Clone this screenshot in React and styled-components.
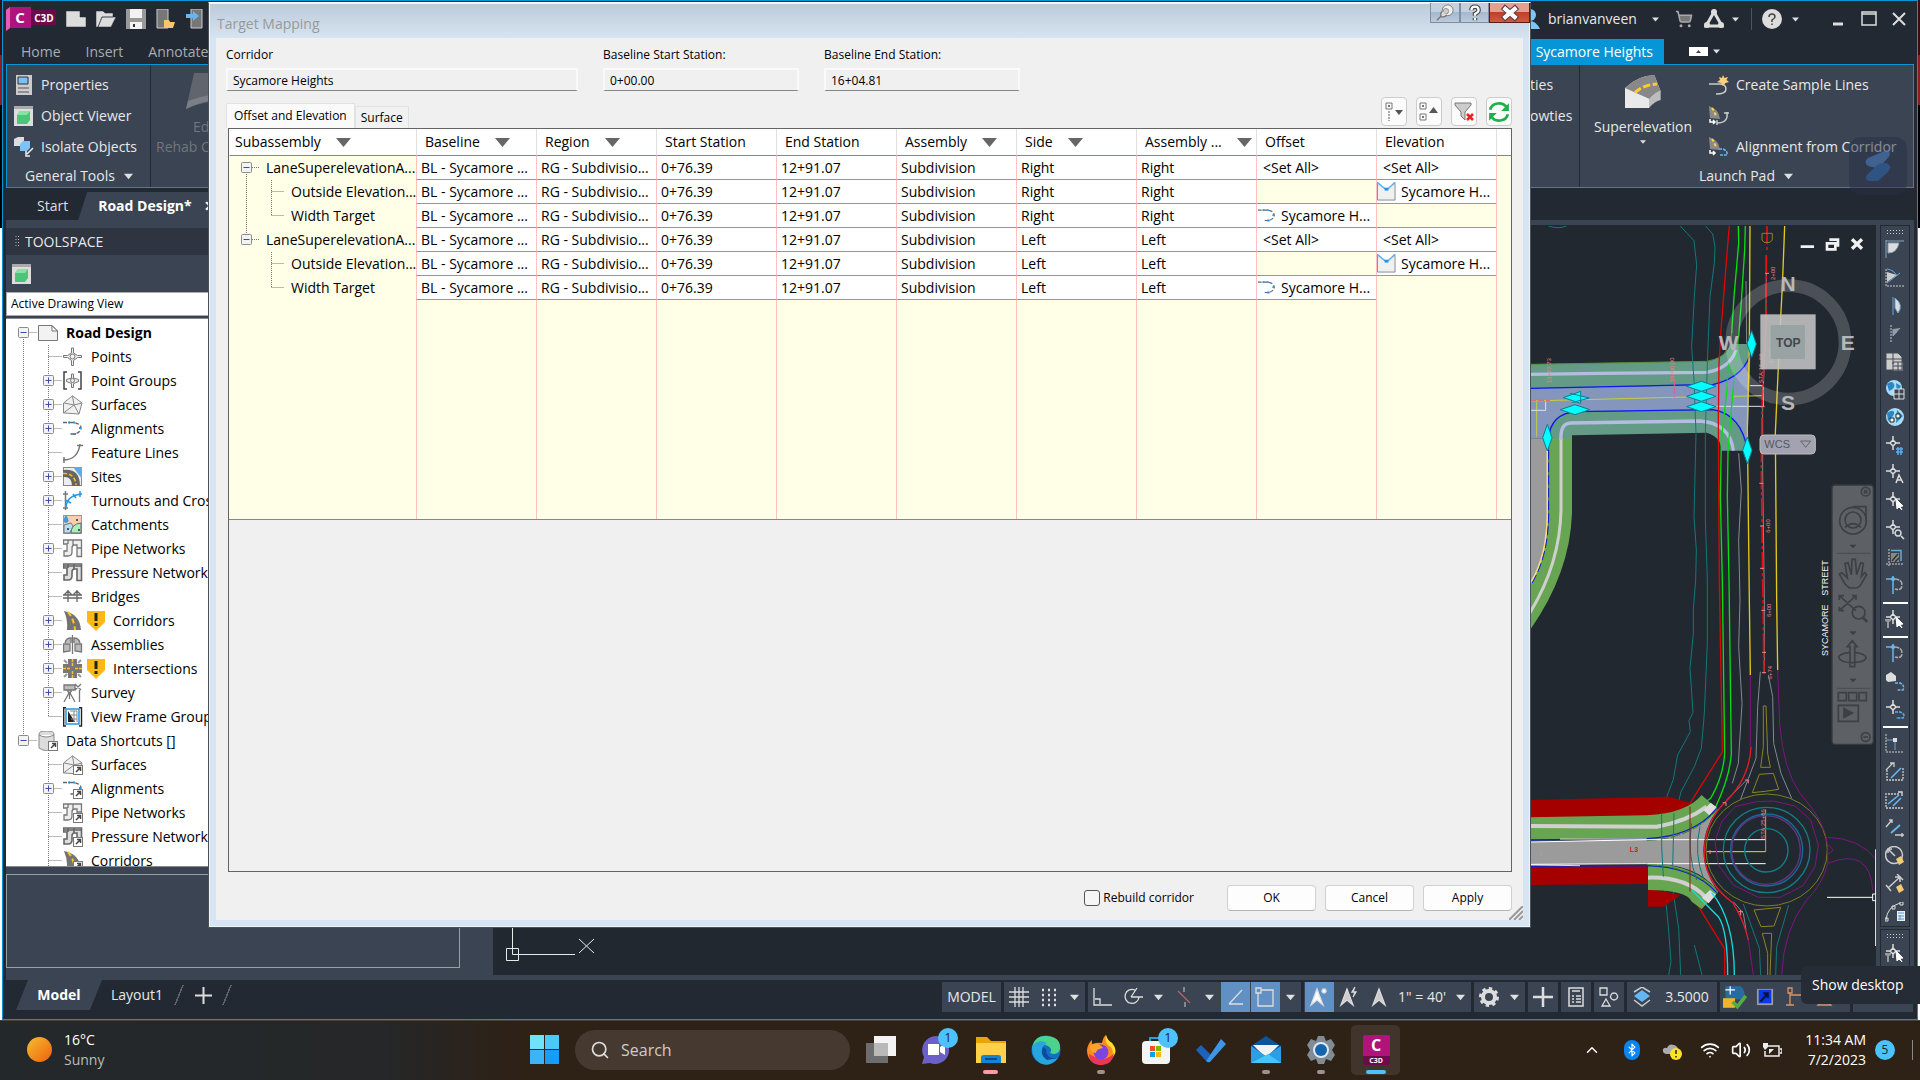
import React from "react";
import styled, { createGlobalStyle } from "styled-components";
import { ShoppingCart, Wifi, Volume2, Bluetooth, ChevronUp, Search } from "lucide-react";

const columns = [
  { title: "Baseline", filter: true },
  { title: "Region", filter: true },
  { title: "Start Station" },
  { title: "End Station" },
  { title: "Assembly", filter: true },
  { title: "Side", filter: true },
  { title: "Assembly ...", filter: true },
  { title: "Offset" },
  { title: "Elevation" },
];

const targets = [
  { name: "LaneSuperelevationA...", side: "Right", kind: "group" },
  { name: "Outside Elevation...", side: "Right", kind: "elevation" },
  { name: "Width Target", side: "Right", kind: "width" },
  { name: "LaneSuperelevationA...", side: "Left", kind: "group" },
  { name: "Outside Elevation...", side: "Left", kind: "elevation" },
  { name: "Width Target", side: "Left", kind: "width" },
];

const tree = [
  { label: "Road Design", icon: "drawing", root: true, box: "minus" },
  { label: "Points", icon: "point" },
  { label: "Point Groups", icon: "pointGroup", box: "plus" },
  { label: "Surfaces", icon: "surface", box: "plus" },
  { label: "Alignments", icon: "alignment", box: "plus" },
  { label: "Feature Lines", icon: "feature" },
  { label: "Sites", icon: "site", box: "plus" },
  { label: "Turnouts and Crossings", icon: "turnout", box: "plus" },
  { label: "Catchments", icon: "catchment" },
  { label: "Pipe Networks", icon: "pipe", box: "plus" },
  { label: "Pressure Networks", icon: "pressure" },
  { label: "Bridges", icon: "bridge" },
  { label: "Corridors", icon: "corridor", box: "plus", warn: true },
  { label: "Assemblies", icon: "assembly", box: "plus" },
  { label: "Intersections", icon: "intersection", box: "plus", warn: true },
  { label: "Survey", icon: "survey", box: "plus" },
  { label: "View Frame Groups", icon: "viewFrame", last: true },
  { label: "Data Shortcuts []", icon: "database", root: true, box: "minus", end: true, link: true },
  { label: "Surfaces", icon: "surface", link: true, second: true },
  { label: "Alignments", icon: "alignment", box: "plus", link: true, second: true },
  { label: "Pipe Networks", icon: "pipe", link: true, second: true },
  { label: "Pressure Networks", icon: "pressure", link: true, second: true },
  { label: "Corridors", icon: "corridor", link: true, second: true },
];

const sideTools = [
  "arc", "wedge", "lens", "tri", "sheet", "globe", "globe2", "ptHash", "ptA", "ptCursor", "ptZoom", "hatch", "curve", "-",
  "pick", "-",
  "curve", "surfCurve", "ptCurve", "-",
  "axisA", "axisB", "axisC", "axisD", "circleTag", "measure", "calc",
];

const glyphs = {
  drawing: (
    <path d="M.5 2.500H14L19.500 8V17.500H.5Z M14 2.500V8H19.500Z" fill="#f2f2f2" stroke="#777" />
  ),
  point: (
    <g fill="#f2f2f2" stroke="#777">
      <path d="M8.500 1h2v5l4 2.500h4v2h-4l-4 3v5h-2v-5l-4-3h-4v-2h4l4-2.500Z" />
      <circle cx="9.500" cy="9.500" r="2.500" />
    </g>
  ),
  pointGroup: (
    <g fill="#eee" stroke="#777">
      <path d="M4 1H1V18H4M15 1H18V18H15" fill="none" stroke="#444" strokeWidth="1.500" />
      <path d="M8.500 3h2v4l5 1.500v2l-5 2v4h-2v-4l-5-2v-2l5-1.500Z" />
      <circle cx="9.500" cy="9.500" r="2" />
    </g>
  ),
  surface: (
    <path d="M.5 18V8L9.500 .8L19 8L16 19ZM9.500 1L11 10L.5 18M11 10L19 8M11 10L16 19M1 8L11 10" fill="#f0f0f0" stroke="#888" />
  ),
  alignment: (
    <g fill="none" strokeWidth="1.300">
      <path d="M0 3.500H11Q18 5 18 9T12 15H7" stroke="#666" strokeDasharray="4 2" />
      <path d="M5 3.500h2M10 3.500h2M17 8v2M10 15h3" stroke="#2196e8" strokeWidth="2" />
    </g>
  ),
  feature: (
    <path d="M0 17Q15 17 17 1M1 14v6M14 2.500h6" fill="none" stroke="#777" strokeWidth="1.500" />
  ),
  site: (
    <g>
      <rect x=".5" y=".5" width="18" height="18" fill="#eee" stroke="#888" />
      <path d="M10 0H19V12Z" fill="#62a9e5" />
      <path d="M0 3Q17 1 17 19H9Q9 9 0 10Z" fill="#666" />
      <path d="M0 6.500Q12 6 13 18" fill="none" stroke="#fcbf21" strokeWidth="1.500" strokeDasharray="4 2" />
    </g>
  ),
  turnout: (
    <g fill="none" strokeWidth="1.500">
      <path d="M2.500 0V19M0 3h5M0 17h5" stroke="#777" />
      <path d="M3 16Q4 4 19 3M17 0v6M10 3l3 4M2 9l6 3" stroke="#2196e8" />
    </g>
  ),
  catchment: (
    <g>
      <rect x=".5" y=".5" width="18" height="18" fill="#f7cdb0" stroke="#999" />
      <path d="M8 18Q8 9 18 8V18Z" fill="#a9efb8" stroke="#666" />
      <path d="M1 10L8 8L10 11L7 18H1Z" fill="#b7dcf5" stroke="#777" />
      <path d="M3 0Q8 7 3 8Q-2 7 3 0Z" fill="#3d9bdc" />
      <path d="M13 4h2v2h-2zM15 14h2v2h-2zM4 13h2v2h-2z" fill="#555" />
    </g>
  ),
  pipe: (
    <path d="M.5 1H18.500V17.500H14V6H11.500Q9 6 9 9V13Q9 17 5 17H1V12H4V5H.5ZM5 1v4M10 1v5M14 9h4" fill="#eee" stroke="#777" strokeWidth="1.300" />
  ),
  pressure: (
    <path d="M.5 1H18.500V17.500H14V6H11.500Q9 6 9 9V13Q9 17 5 17H1V12H4V5H.5ZM1 3H18M5 1v4M11 1v5" fill="#ddd" stroke="#666" strokeWidth="1.600" />
  ),
  bridge: (
    <path d="M0 8H19M0 11H19M5 3V15M14 3V15M1 8l4-4l4 4M10 8l4-4l4 4" fill="none" stroke="#666" strokeWidth="1.300" />
  ),
  corridor: (
    <g>
      <path d="M1 0Q17 3 18 19H4Q5 9 1 0Z" fill="#737373" />
      <path d="M5 1Q11 8 12 19" fill="none" stroke="#fcc227" strokeWidth="2" strokeDasharray="5 3" />
    </g>
  ),
  assembly: (
    <path d="M9.500 0V19M.5 17V9H7V16ZM12 16V9H18.500V17ZM2 8Q3 3 8 3V8M11 8V3Q16 3 17 8" fill="#bbb" stroke="#777" strokeWidth="1.300" />
  ),
  intersection: (
    <g>
      <path d="M5 0H14V5H19V14H14V19H5V14H0V5H5Z" fill="#777" />
      <path d="M9.500 0V7M9.500 12V19M0 9.500H7M12 9.500H19" stroke="#fcc227" strokeWidth="1.500" strokeDasharray="3 1" />
      <path d="M1 1l3 3M18 1l-3 3M1 18l3-3M18 18l-3-3" stroke="#999" strokeWidth="2" />
    </g>
  ),
  survey: (
    <g fill="#bbb" stroke="#777" strokeWidth="1.300">
      <path d="M1 2H12V7H1ZM4 7H9L7 10H6ZM12 1L18 7M18 1L12 7M16.500 7V19" />
      <path d="M6.500 9L1 19M6.500 9L12 19M6.500 9V16" fill="none" />
    </g>
  ),
  viewFrame: (
    <g fill="none">
      <path d="M3 .7H.7V19H3M16 .7H18.500V19H16" stroke="#222" strokeWidth="1.400" />
      <rect x="3" y="2" width="13" height="15" stroke="#2196e8" strokeWidth="1.500" />
      <path d="M5 4V15H12Z" fill="#222" />
      <path d="M7 4H14V15M11 4V15M8 8H14M8 12H14" stroke="#888" />
    </g>
  ),
  database: (
    <path d="M1 4V17Q8 22 16 17V4Q8 8 1 4Q0 0 8.500 0Q17 0 16 4" fill="#ddd" stroke="#888" />
  ),
};

const tools = {
  arc: <path d="M1 0V18M1 1H19M3 3H14Q12 13 3 13Z" fill="#ddd" stroke="#8aa6bd" />,
  wedge: (
    <g fill="none">
      <path d="M1 1V18H19" stroke="#ccc" strokeDasharray="2 1" />
      <path d="M2 4V14L12 7Z" fill="#ccc" />
      <path d="M2 1Q9 2 12 8M2 15L15 5" stroke="#6ca5d3" />
    </g>
  ),
  lens: <path d="M8 1V19M10 2Q19 9 13 17L10 12Z" fill="#ddd" stroke="#6ca5d3" />,
  tri: (
    <g>
      <path d="M6 1V18" stroke="#ccc" strokeDasharray="2 1" />
      <path d="M8 5V12L15 4M8 8L12 8" fill="#999" stroke="#8aa6bd" />
    </g>
  ),
  sheet: <path d="M1 1H13L17 5V18H1ZM1 7H17M8 1V12M8 10H18V19H8ZM13 10V19M8 14H18" fill="#ccc" stroke="#454b54" />,
  globe: (
    <g>
      <circle cx="9" cy="8" r="8" fill="#a9dcf5" />
      <path d="M2 4Q7 0 9 4T4 11ZM11 3L16 6L12 13Z" fill="#2a86c4" />
      <path d="M9 9H19V19H9ZM14 9V19M9 14H19" fill="#3b4453" stroke="#ddd" />
    </g>
  ),
  globe2: (
    <g>
      <circle cx="10" cy="9" r="9" fill="#a9dcf5" />
      <path d="M2 5Q8 1 9 4T3 13ZM12 2L18 8L11 15Z" fill="#2a86c4" />
      <path d="M5 10h4v4h-4zM11 6h4v4h-4z" fill="#fff" stroke="#222" />
    </g>
  ),
  calc: (
    <g>
      <path d="M1 18Q2 5 15 1M0 16h3v3H0zM7 4h3v3H7zM15 0h3v3h-3z" fill="none" stroke="#ddd" />
      <path d="M12 9H20V19H12Z" fill="#eee" />
      <path d="M13 11H19M13 14H19M13 17H19M15 13v5" stroke="#4b9bd8" />
    </g>
  ),
  hatch: (
    <g fill="none">
      <path d="M4 1V19M1 16H19" stroke="#ccc" strokeDasharray="2 1" />
      <path d="M6 5H14V14H6Z" fill="#888" />
      <path d="M7 13L13 6M10 14L14 10" stroke="#333" strokeWidth="1.500" />
      <path d="M6 2.500H16V13" stroke="#65a9d8" strokeWidth="1.500" />
    </g>
  ),
  curve: (
    <g fill="none" strokeWidth="1.500">
      <path d="M1 3H8M8 0V18" stroke="#65b7f3" />
      <path d="M9 3Q17 3 17 9T10 13" stroke="#aaa" strokeDasharray="5 1" />
      <circle cx="8" cy="3" r="2" fill="#65b7f3" stroke="none" />
    </g>
  ),
  surfCurve: (
    <g>
      <path d="M1 8V3L6 0L11 4V9L3 10Z" fill="#ddd" />
      <path d="M10 11H15Q20 13 18 18H12" fill="none" stroke="#74b5e5" strokeWidth="1.500" strokeDasharray="3 1" />
    </g>
  ),
  axisA: (
    <g fill="none">
      <path d="M1 0V18H19" stroke="#ccc" strokeDasharray="2 1" />
      <path d="M1 6H10V16" stroke="#65a9d8" />
      <path d="M8 4h4v4H8Z" fill="#ddd" />
    </g>
  ),
  axisB: (
    <g fill="none" strokeWidth="1.300">
      <path d="M2 8V18H18V5" stroke="#ccc" strokeDasharray="2 1" />
      <path d="M1 8L8 1M5 1h4v4" stroke="#ccc" />
      <path d="M6 16L16 6" stroke="#65b7f3" strokeWidth="1.600" />
    </g>
  ),
  axisC: (
    <g fill="none" strokeWidth="1.300">
      <path d="M1 3V18H19M3 4H14" stroke="#ccc" strokeDasharray="2 1" />
      <path d="M3 14L14 5M8 16L16 8" stroke="#65b7f3" strokeWidth="1.600" />
      <path d="M13 2h4v4" stroke="#ddd" />
    </g>
  ),
  axisD: (
    <g fill="none" strokeWidth="1.400">
      <path d="M1 9L7 2M4 2h3v3M10 17H19M17 15v4" stroke="#ccc" />
      <path d="M6 15L15 7" stroke="#65b7f3" strokeWidth="1.800" />
    </g>
  ),
};

const PointMark = ({ cursor, tail }) => (
  <g fill="none" stroke="#ddd" strokeWidth="1.500">
    <path d="M8 0V4M8 10V14M1 7H5M11 7H15M8 4L11 7L8 10L5 7Z" />
    {tail}
    {cursor && <path d="M11 7L18 14L15 14.500L17 18L14 15L12 17Z" fill="#fff" stroke="#fff" strokeWidth="1" />}
  </g>
);

tools.ptHash = <PointMark tail={<path d="M11 13H18M11 16H18M13 11V19M16 11V19" stroke="#55aef0" />} />;
tools.ptA = <PointMark tail={<path d="M11 19L14 11L18 19M12 16H17" />} />;
tools.ptCursor = <PointMark cursor />;
tools.ptZoom = <PointMark tail={<path d="M13 10A3 3 0 1 0 13.100 10M16 16L19 19" />} />;
tools.pick = <PointMark cursor tail={<path d="M0 9H6V11L4 12V18H2V12L0 11Z" fill="#999" stroke="none" />} />;
tools.ptCurve = <PointMark tail={<path d="M10 12H15Q21 14 18 18H11" stroke="#55aef0" strokeDasharray="3 1" />} />;
tools.circleTag = (
  <g fill="none" stroke="#ccc" strokeWidth="1.500">
    <circle cx="9" cy="9" r="8.500" />
    <path d="M4 4L10 10M3 7V3H7" />
    <path d="M11 13L16 10L19 16L14 19Z" fill="#f4ca76" stroke="none" />
  </g>
);
tools.measure = (
  <g fill="none" stroke="#ccc" strokeWidth="1.500">
    <path d="M3 14L15 3M1 11L6 17M12 0L18 6M10 3h5v5" />
    <path d="M11 13L16 10L19 16L14 19Z" fill="#f4ca76" stroke="none" />
  </g>
);

const Icon = ({ children, size = 20, label }) => (
  <svg width={size} height={size} viewBox="0 0 20 20" role="img" aria-label={label} style={{ flexShrink: 0 }}>
    {children}
  </svg>
);

const LinkMark = () => (
  <g>
    <rect x="10.500" y="10.500" width="9" height="9" fill="#fff" stroke="#777" />
    <path d="M13 17L17 13M14 12.500H17.500V16" stroke="#444" strokeWidth="1.500" fill="none" />
  </g>
);

const Caret = ({ w = 9, color = "#e0e0e0" }) => (
  <svg width={w} height={w} viewBox="0 0 10 10" aria-hidden="true">
    <path d="M0 2H10L5 8Z" fill={color} />
  </svg>
);

const TreeBox = ({ x, plus }) => (
  <g>
    <rect x={x - 5} y="6.500" width="10" height="10" rx="1" fill="#f3f3f3" stroke="#8b8b8b" />
    <path d={`M${x - 3} 11.500h6${plus ? `M${x} 8.500v6` : ""}`} stroke="#3350a5" strokeWidth="1" />
  </g>
);

const TreeGuide = ({ item, first }) => {
  const x = item.root ? 17.5 : 42.5;
  const w = item.root ? 32 : 57;
  return (
    <svg width={w} height="24" aria-hidden="true" style={{ flexShrink: 0 }}>
      <g stroke="#777" strokeDasharray="1 1" fill="none">
        <path d={`M${x} 11.500H${w - 1}`} />
        {!item.second && <path d={`M17.500 ${first ? 12 : 0}V${item.end ? 12 : 24}`} />}
        {!item.root && <path d={`M42.500 0V${item.last ? 12 : 24}`} />}
      </g>
      {item.box && <TreeBox x={x} plus={item.box === "plus"} />}
    </svg>
  );
};

const TargetGuide = ({ kind, index }) => (
  <svg width={kind === "group" ? 37 : 62} height="24" aria-hidden="true" style={{ flexShrink: 0 }}>
    <g stroke="#777" strokeDasharray="1 1" fill="none">
      {index < 4 && <path d={`M17.500 ${index === 0 ? 12 : 0}V${index === 3 ? 12 : 24}`} />}
      {kind === "group" && <path d="M23 11.500H30" />}
      {kind !== "group" && <path d={`M42.500 0V${kind === "width" ? 12 : 24}M42.500 11.500H55`} />}
    </g>
    {kind === "group" && <TreeBox x={17.5} />}
  </svg>
);

const Diamond = ({ x, y, tall }) => {
  const a = tall ? 14 : 44;
  const b = tall ? 40 : 15;
  return <path d={`M${x - a} ${y}L${x} ${y - b}L${x + a} ${y}L${x} ${y + b}Z`} fill="#00ffff" stroke="#087e8e" />;
};

const Station = ({ x, y, children }) => (
  <text transform={`translate(${x} ${y}) rotate(-90)`} fontSize="18" fill="#f28080" textAnchor="middle">
    {children}
  </text>
);

// three drawing units to one screen pixel
const PlanView = () => (
  <svg width="346" height="749" viewBox="90 18 1038 2247" fill="none" strokeWidth="3" fontFamily="Liberation Sans, sans-serif" role="img" aria-label="Plan view">
    <path d="M90 655H142V900Q142 1010 90 1090Z" fill="#9b9b9b" />
    <path d="M146 653H216V880Q210 1060 90 1230V1095Q140 1010 146 900Z" fill="#68a552" />
    <path d="M183 655V870Q180 1030 90 1178" stroke="#cfcfcf" strokeWidth="9" />
    <path d="M142 690V880Q142 1010 90 1092" stroke="#f6dd84" strokeWidth="5" />
    <path d="M146 690V880Q146 1010 92 1096" stroke="#0a18e8" strokeDasharray="28 10" />
    <path d="M90 505L640 495Q740 470 752 372L742 692Q720 590 640 570L230 575Q150 580 142 655H90Z" fill="#8596bd" />
    <path d="M90 433L620 424Q680 415 690 372H752Q745 470 640 495L90 505Z" fill="#639b87" />
    <path d="M90 433L620 424Q670 415 680 390" stroke="#58923b" />
    <path d="M142 655Q150 580 230 575L640 570Q730 590 742 692H664Q664 650 620 638L216 646V655Z" fill="#639b87" />
    <path d="M90 463L300 460L620 457Q690 445 708 390M183 660Q180 610 212 609L600 603Q690 610 700 692" stroke="#b4bce0" strokeWidth="10" />
    <path d="M90 505L640 493Q740 470 755 385M146 655Q152 580 230 575L640 569Q725 585 742 690" stroke="#0a18f4" strokeWidth="4" />
    <path d="M90 543L560 531M700 529L790 527M110 545V650" stroke="#c9cc42" />
    <path d="M90 541H150M523 480V532" stroke="#e06079" strokeDasharray="18 6" />
    <path d="M90 571H137V545M650 559H790M750 497H790V560" stroke="#dce2e8" />

    <g stroke="#12777c">
      <path d="M541 18L582 62L590 135L583 230L575 380L582 480L588 640L582 890L589 990L587 1080L580 1170V1240L570 1345L579 1478L567 1502L571 1535L533 1605L520 1678L491 1755L485 1880L490 1970L505 2120L513 2225L506 2265" />
      <path d="M617 18L638 42L645 80L643 130L630 230L622 430L616 640V900L622 1080V1270L613 1480L604 1585L583 1640L543 1715L530 1770L518 1940L520 2020L536 2125L542 2265" />
      <path d="M583 2175L606 2265M145 18Q175 28 200 18" />
    </g>
    <path d="M688 18L683 75L663 330L657 430L655 600L658 1080L667 1596L570 1750L571 2020L674 2187V2265" stroke="#e00505" strokeWidth="4" />
    <g stroke="#06df12" strokeWidth="4">
      <path d="M715 18L716 70L702 230L695 340M682 500L664 660L661 830L667 1080L674 1600Q670 1670 632 1735L575 1775" />
      <path d="M736 18L734 90L725 230L716 350M700 500L684 690L682 830L687 1080L694 1600Q690 1670 645 1765" />
      <path d="M695 340L680 500M716 350L700 500" strokeDasharray="30 14" opacity=".6" />
    </g>
    <g stroke="#e2ca1c" strokeWidth="4">
      <path d="M750 18L748 370L742 620L748 1140L751 1365" />
      <path d="M854 18L847 200L840 330L826 640L830 1140L833 1350" />
    </g>
    <path d="M799 105L798 290L788 560L788 750L793 1140V1360" stroke="#85898e" />
    <path d="M801 18V90M799 105L798 290L786 560L784 750L789 1140L792 1360" stroke="#eb0c14" strokeDasharray="55 8 10 8" strokeWidth="5" />
    <path d="M738 183L740 370M716 700L724 810L716 960L720 1140L716 1280L726 1450L715 1630L697 1690" stroke="#85898e" />
    <path d="M786 40H817V60L810 67H792L786 60Z" stroke="#8b851b" />
    <path d="M795 160h12M780 560h14M778 790h12M780 918h12M780 1045h12M784 1171h12M786 1297h12M786 1358h12" stroke="#e78b8b" />
    <Station x={825} y={160}>2+00</Station>
    <Station x={819} y={411}>3+00</Station>
    <Station x={807} y={665}>4+00</Station>
    <Station x={810} y={918}>6+00</Station>
    <Station x={813} y={1171}>6+00</Station>
    <Station x={816} y={1358}>6+74</Station>
    <Station x={790} y={445}>STA:15+68</Station>
    <Station x={152} y={452}>13+77.73</Station>
    <Station x={522} y={450}>10+00.00</Station>

    <g transform="translate(0 1080)">
      <path d="M90 660L505 650L570 668L560 720L90 735ZM90 855H444V912L90 915ZM444 925L542 945L490 980H444Z" fill="#a50000" />
      <path d="M90 712L440 706Q560 700 605 645L655 690Q600 770 440 778L90 782Z" fill="#68a552" />
      <path d="M444 848Q590 855 655 935L605 987L575 965Q560 930 444 930Z" fill="#68a552" />
      <path d="M90 785L440 778Q590 770 650 690Q570 810 650 930Q590 850 440 850L90 855Z" fill="#9b9b9b" />
      <path d="M90 738L470 740Q560 725 620 680M444 893Q560 890 618 953" stroke="#d0d0d0" strokeWidth="12" />
      <path d="M610 690L632 668L650 682L628 706ZM606 953L630 930L648 944L626 970Z" fill="#ddd" />
      <path d="M90 780L440 776Q580 770 650 686M90 859L440 857Q580 860 650 938" stroke="#1220c6" strokeWidth="4" />
      <path d="M180 777H440M90 855L240 857" stroke="#f2dfaa" />
      <path d="M440 782Q580 774 650 690M440 853Q580 860 650 934" stroke="#35832a" strokeDasharray="30 6" />
      <path d="M90 786L440 779H797M90 853L440 851H797" stroke="#fff" />
      <path d="M620 815H797" stroke="#e3e015" />
      <path d="M797 688V815M124 817V828M377 812V825M630 810V822" stroke="#f28080" />
      <text x="389" y="815" fontSize="22" fill="#e11" fontWeight="700">L3</text>
      <path d="M485 700V800L490 890M522 700L518 860M575 730Q560 820 590 900M600 740Q580 820 612 900" stroke="#12777c" />
      <path d="M570 680V935" stroke="#901717" />
      <ellipse cx="800" cy="810" rx="182" ry="168" stroke="#7f7d20" />
      <path d="M770 665L820 663L885 678L932 720L955 795L945 860L908 918L840 952L775 952L700 915L655 855L645 785L665 725L705 680Z" stroke="#7b1680" />
      <g stroke="#127f86" strokeWidth="4">
        <ellipse cx="800" cy="810" rx="130" ry="128" />
        <circle cx="800" cy="810" r="108" stroke="#156b9a" />
        <circle cx="798" cy="810" r="103" stroke="#633480" />
        <circle cx="799" cy="811" r="65" />
      </g>
      <path d="M781 275L773 380L768 535L722 657M805 285L818 350L821 490L843 580L875 655M740 600L680 660M700 965L730 1000L738 1050" stroke="#85898e" />
      <path d="M751 285V500M833 270L839 430Q850 570 900 640Q980 730 983 800V850Q970 910 920 960Q850 1050 845 1185M745 1080L760 1185" stroke="#7b1680" />
      <path d="M983 772Q1080 775 1128 838M983 850Q1110 800 1118 930M985 795L1000 810L985 822" stroke="#7b1680" />
      <path d="M790 378H798L803 520L811 562H782L790 500ZM778 583L820 580L836 628Q795 635 757 638ZM762 990L842 982L822 1038L783 1040ZM787 1060H815L810 1185M787 1060L803 1120V1185" stroke="#8b861f" />
      <path d="M730 972L778 1105L782 1185M866 975L830 1100L827 1185" stroke="#12777c" />
      <path d="M753 500Q748 600 670 672Q610 735 613 830Q620 910 700 970Q735 1030 745 1080" stroke="#e61a2a" strokeWidth="4" />
      <path d="M735 600h10v10M668 668h10v10M715 995h14M722 990v16" stroke="#f28080" />
      <path d="M575 930L655 1010Q683 1050 683 1185M635 938Q703 1020 703 1185" stroke="#10dde3" strokeWidth="4" />
      <Station x={796} y={732}>STA:25+86</Station>
      <path d="M981 952H1118M1118 942H1130V962H1118ZM1127 808V1098" stroke="#fff" />
    </g>

    <Diamond x={604} y={499} />
    <Diamond x={604} y={529} />
    <Diamond x={604} y={560} />
    <Diamond x={225} y={569} />
    <path d="M190 533L242 514V550ZM210 520L268 534L215 548" fill="#00ffff" stroke="#087e8e" />
    <Diamond x={755} y={372} tall />
    <Diamond x={742} y={691} tall />
    <Diamond x={142} y={653} tall />

    <circle cx="865" cy="367" r="170" stroke="#fff" strokeOpacity=".19" strokeWidth="38" />
    <rect x="781" y="283" width="166" height="165" fill="#c4c4c4" opacity=".88" />
    <rect x="812" y="315" width="103" height="102" fill="#9aa3a4" />
    <g fill="#b5b7b9" fontSize="63" fontWeight="700" textAnchor="middle">
      <text x="864" y="212">N</text>
      <text x="864" y="569">S</text>
      <text x="686" y="390">W</text>
      <text x="1043" y="390">E</text>
      <text x="865" y="380" fontSize="36" fill="#41474d">TOP</text>
    </g>
    <rect x="780" y="645" width="166" height="57" rx="12" fill="#a3a2b0" stroke="#bbb" />
    <text x="793" y="685" fontSize="33" fill="#55585f">WCS</text>
    <path d="M902 663H932L917 682Z" stroke="#666" />
    <g fontSize="27" fill="#f3f3f3">
      <text transform="translate(985 1308) rotate(-90)">SYCAMORE</text>
      <text transform="translate(985 1127) rotate(-90)">STREET</text>
    </g>

    <rect x="996" y="795" width="124" height="778" rx="9" fill="#5d6166" stroke="#34393f" strokeWidth="4" />
    <g stroke="#3c4146" strokeWidth="5">
      <circle cx="1097" cy="815" r="13" />
      <path d="M1092 810l10 10m0-10l-10 10" />
      <circle cx="1059" cy="902" r="40" />
      <circle cx="1059" cy="900" r="24" />
      <path d="M1059 860H1098V902M1035 922Q1059 900 1083 922" />
      <path d="M1050 975h18l-9 9zM1050 1235h18l-9 9zM1050 1377h18l-9 9z" fill="#3c4146" strokeWidth="2" />
      <path d="M1010 1000H1112M1010 1405H1112" strokeWidth="2" />
      <path d="M1035 1092L1018 1062L1026 1058L1042 1074L1035 1030L1044 1028L1054 1064L1056 1018L1066 1018L1070 1064L1082 1028L1090 1030L1084 1070L1094 1058L1100 1064L1080 1098L1070 1104H1048Z" />
      <path d="M1018 1127L1068 1172M1068 1127L1018 1172M1018 1140v-13h14M1056 1127h12v13M1018 1160v12h14" />
      <circle cx="1076" cy="1178" r="19" />
      <path d="M1088 1192L1102 1206" strokeWidth="8" />
      <path d="M1050 1340V1280H1042L1057 1262L1071 1280H1064V1340ZM1050 1297Q1016 1302 1016 1312Q1020 1328 1060 1328Q1098 1326 1098 1312Q1096 1302 1064 1297" />
      <path d="M1015 1418h24v24h-24zM1046 1418h24v24h-24zM1077 1418h22v24h-22zM1015 1456h60v48h-60z" />
      <path d="M1032 1466V1492L1057 1479Z" fill="#3c4146" />
      <circle cx="1097" cy="1551" r="13" />
      <path d="M1090 1551h14" />
    </g>
    <g stroke="#f1f1f1" strokeWidth="8">
      <path d="M902 80H942M981 70H1006V88H981ZM988 59H1014V80" />
      <path d="M1056 58L1086 86M1086 58L1056 86" strokeWidth="10" />
    </g>
  </svg>
);

const SuperIcon = ({ w = 36, h = 34 }) => (
  <svg width={w} height={h} viewBox="0 0 108 100" aria-hidden="true">
    <path d="M0 38Q40 0 88 0L107 48Q70 55 72 70V98H0Z" fill="#e9e9e9" />
    <path d="M0 38Q40 0 88 0L107 48Q88 50 72 70Z" fill="#888" />
    <path d="M30 52Q55 28 96 26" fill="none" stroke="#ffcf25" strokeWidth="9" strokeDasharray="22 8" />
    <path d="M72 70Q88 50 107 46V74Q88 78 72 98Z" fill="#bdbdbd" />
  </svg>
);

const taskApps = [
  { name: "Task view", icon: <g><rect x="0" y="8" width="22" height="20" fill="#6d6d6d" /><rect x="8" y="1" width="22" height="20" fill="#f3f3f3" /><rect x="8" y="8" width="14" height="13" fill="#b9b9b9" /></g> },
  { name: "Chat", badge: "1", icon: <g><path d="M15 1A14 14 0 1 1 9 28L1 29L3 22A14 14 0 0 1 15 1Z" fill="#6a60c8" /><path d="M7 9H18V20H7ZM19 12L24 9V20L19 17Z" fill="#fff" /></g> },
  { name: "File Explorer", mark: "pink", icon: <g><path d="M0 2H11L15 6H30V28H0Z" fill="#e9a600" /><path d="M0 8H30V28H0Z" fill="#ffd04a" /><path d="M5 28V22Q5 20 8 20H22Q25 20 25 22V28Z" fill="#1583d4" /><path d="M9 24H21" stroke="#0a4c87" strokeWidth="2" /></g> },
  { name: "Edge", icon: <g><circle cx="15" cy="15" r="14.500" fill="#1071c4" /><path d="M1 14Q3 0 16 1Q30 2 29 14Q27 21 19 18Q22 14 17 11Q8 7 1 14Z" fill="#4bd38c" /><path d="M1 13Q5 3 16 8Q9 12 12 19Q17 27 27 23Q19 33 9 28Q1 23 1 13Z" fill="#27a6dd" /><path d="M12 12Q8 20 16 25L27 23Q15 25 15 14Z" fill="#0b4d9c" /></g> },
  { name: "Firefox", mark: "dot", icon: <g><path d="M15 30Q1 28 1 15Q2 8 6 5V9Q12 7 16 8Q17 2 20 0Q21 5 26 8Q34 24 15 30Z" fill="#ff8a1d" /><path d="M20 0Q18 9 25 12Q29 18 24 25Q34 17 26 8Q21 5 20 0Z" fill="#ffdd35" /><path d="M3 19Q3 30 16 30Q27 29 28 18Q19 29 3 19Z" fill="#ed3554" /><circle cx="15" cy="17" r="7.500" fill="#7a45e0" /><path d="M4 10Q13 7 17 13Q10 14 10 18Q4 18 4 10Z" fill="#ffa42b" /></g> },
  { name: "Store", badge: "1", icon: <g><path d="M9 7V3H21V7" fill="none" stroke="#2b9be8" strokeWidth="2" /><rect x="1" y="6" width="28" height="23" rx="4" fill="#f4f4f4" /><path d="M9 11H14V16H9Z" fill="#f05023" /><path d="M15 11H20V16H15Z" fill="#7fba00" /><path d="M9 17H14V22H9Z" fill="#00a4ef" /><path d="M15 17H20V22H15Z" fill="#ffb900" /></g> },
  { name: "To Do", icon: <g><path d="M0 15L5 10L15 20L10 26Z" fill="#1c62b9" /><path d="M10 26L25 4L30 9L14 27Q12 28 10 26Z" fill="#3c97e8" /></g> },
  { name: "Mail", mark: "dot", icon: <g><path d="M0 11L15 1L30 11V15H0Z" fill="#0c549c" /><path d="M2 10H28L15 23Z" fill="#f2f2f2" /><path d="M0 11L15 21L30 11V28H0Z" fill="#2b9ee6" /><path d="M0 28L17 19L30 28Z" fill="#47c5f8" /></g> },
  { name: "Settings", mark: "dot", icon: <g><path d="M12 1H18L20 6L25 4L29 10L26 15L29 20L25 26L20 24L18 29H12L10 24L5 26L1 20L4 15L1 10L5 4L10 6Z" fill="#808b95" /><circle cx="15" cy="15" r="8" fill="#dde8f0" /><circle cx="15" cy="15" r="6" fill="#1764ae" /></g> },
  { name: "Civil 3D", mark: "bar", active: true, icon: <g><rect x="2" y="0" width="27" height="30" rx="2" fill="#b0147c" /><path d="M2 21H29V28Q29 30 27 30H4Q2 30 2 28Z" fill="#6c0a4c" /><text x="15" y="16" fontSize="16" fontWeight="700" fill="#fff" textAnchor="middle">C</text><text x="15" y="28" fontSize="7" fontWeight="700" fill="#fff" textAnchor="middle">C3D</text></g> },
];

const App = () => {
  return (
    <Desktop>
      <GlobalStyle />
      <Shell>
        <TitleBar>
          <QuickBar>
            <svg width="50" height="24" viewBox="0 0 50 24" role="img" aria-label="Civil 3D">
              <path d="M0 3L4 0H25V21H4L0 24Z" fill="#b0147c" />
              <path d="M0 3L4 0V21L0 24Z" fill="#e45cb8" />
              <path d="M25 3H50V18H25Z" fill="#6c0a4c" />
              <text x="14" y="16" fontSize="15" fontWeight="700" fill="#fff" textAnchor="middle">C</text>
              <text x="38" y="15" fontSize="10" fontWeight="700" fill="#fff" textAnchor="middle">C3D</text>
            </svg>
            <Icon label="New"><path d="M0 2H14L20 8V18H0ZM14 2V8H20Z" fill="#ddd" stroke="#222933" strokeWidth=".5" /></Icon>
            <Icon label="Open"><path d="M0 18V2H7L9 4H17V8H6L2 18ZM6 8H20L15 18H2Z" fill="#ddd" stroke="#222933" strokeWidth=".5" /></Icon>
            <Icon label="Save"><path d="M0 0H20V20H0Z" fill="#999" /><path d="M4 0H16V9H4ZM4 13H16V20H4Z" fill="#f2f2f2" /><path d="M7 15H9V18H7Z" fill="#333" /></Icon>
            <Icon label="Open from device"><path d="M1 0H12V19H1Z" fill="#777" stroke="#ccc" /><path d="M8 11H13L14 13H19L17 19H8Z" fill="#f8c471" /></Icon>
            <Icon label="Save to device"><path d="M5 0H16V19H5Z" fill="#777" stroke="#ccc" /><path d="M0 5H7V2L13 7L7 12V9H0Z" fill="#65b7f3" /></Icon>
          </QuickBar>
          <UserBar>
            <svg width="16" height="20" viewBox="0 0 16 20" aria-hidden="true">
              <circle cx="6" cy="6" r="6" fill="#7cc4fa" /><path d="M0 20Q0 12 6 12T16 20Z" fill="#7cc4fa" />
            </svg>
            <UserName>brianvanveen</UserName>
            <BarButton aria-label="Account" $w={34}><Caret w={7} /></BarButton>
            <BarButton aria-label="Store" $w={24}><ShoppingCart size={18} color="#aaa" fill="#777" /></BarButton>
            <BarButton aria-label="Autodesk App" $w={36}><Icon><path d="M10 3L2 17H18Z" fill="none" stroke="#ddd" strokeWidth="3" /><circle cx="10" cy="3" r="3" fill="#ddd" /><circle cx="3" cy="16" r="3" fill="#ddd" /><circle cx="17" cy="16" r="3" fill="#ddd" /></Icon></BarButton>
            <Caret w={7} />
            <BarLine />
            <BarButton aria-label="Help" $w={40}><Icon><circle cx="10" cy="10" r="10" fill="#ddd" /><path d="M7 8Q7 5 10 5T13 8Q13 9 10 11V13M10 14.500V16" fill="none" stroke="#444" strokeWidth="1.500" /></Icon></BarButton>
            <Caret w={7} />
            <Spacer $w={24} />
            <BarButton aria-label="Minimise" $w={30}><Icon><path d="M5 15H15" stroke="#ddd" strokeWidth="3" /></Icon></BarButton>
            <BarButton aria-label="Maximise" $w={32}><Icon><path d="M3 3H17V16H3ZM3 5H17" fill="none" stroke="#ddd" strokeWidth="1.500" /></Icon></BarButton>
            <BarButton aria-label="Close" $w={28}><Icon><path d="M4 4L16 16M16 4L4 16" stroke="#ddd" strokeWidth="2" /></Icon></BarButton>
          </UserBar>
        </TitleBar>

        <RibbonTabs>
          <RibbonTab>Home</RibbonTab>
          <RibbonTab>Insert</RibbonTab>
          <RibbonTab>Annotate</RibbonTab>
          <ContextTab>Sycamore Heights</ContextTab>
          <RibbonToggle aria-label="Minimise ribbon">
            <svg width="19" height="9"><rect width="19" height="9" fill="#fff" /><path d="M7 6H12L9.500 3Z" fill="#444" /></svg>
            <Caret w={7} />
          </RibbonToggle>
        </RibbonTabs>

        <Ribbon>
          <GeneralPanel>
            <RibbonItem><Icon><path d="M2 0H18V20H2Z" fill="#ccc" /><path d="M4 2H14V9H4Z" fill="#78c0f5" stroke="#333" /><path d="M4 13H15M4 17H15" stroke="#555" /></Icon>Properties</RibbonItem>
            <RibbonItem><ViewerIcon />Object Viewer</RibbonItem>
            <RibbonItem><Icon><path d="M0 2L4 0H10V6L6 9H0Z" fill="#ddd" /><path d="M6 7L9 4H16V11L13 14H6Z" fill="#7fc2f5" /><path d="M19 11L13 17M12 14V19H16" stroke="#eee" fill="none" strokeWidth="1.500" /></Icon>Isolate Objects</RibbonItem>
            <PanelTitle>General Tools <Caret /></PanelTitle>
          </GeneralPanel>
          <RehabPanel>
            <svg width="70" height="38" viewBox="0 0 70 38" aria-hidden="true">
              <path d="M8 0H60L68 36Q36 20 0 36Z" fill="#60656e" /><path d="M0 36Q36 18 68 36L66 30Q36 14 2 28Z" fill="#7a7f87" />
            </svg>
            <RehabTop>Ed</RehabTop>
            <span>Rehab C</span>
          </RehabPanel>
          <EditPanel>
            <span>ties</span>
            <span>owties</span>
          </EditPanel>
          <LaunchPanel>
            <SuperButton>
              <SuperIcon />
              Superelevation
              <Caret w={6} />
            </SuperButton>
            <LaunchList>
              <RibbonItem><Icon><path d="M0 9H10M10 9Q17 9 17 14T7 19" fill="none" stroke="#ccc" strokeWidth="1.500" /><path d="M14 0L15.500 3L19 2L17.500 5L20 7L16.500 8L14 11L12 8L8 7L11 5L10 2L13 3Z" fill="#ffd07a" /></Icon>Create Sample Lines</RibbonItem>
              <RibbonItem aria-label="Feature line from corridor"><RoadIcon tail="M18 6V11Q17 17 8 17M15 7h5M8 14v5" /></RibbonItem>
              <RibbonItem><RoadIcon tail="M10 12H14Q19 14 18 18H11" blue />Alignment from Corridor</RibbonItem>
            </LaunchList>
            <LaunchTitle>Launch Pad <Caret /></LaunchTitle>
          </LaunchPanel>
          <Floater>
            <svg width="26" height="34" viewBox="0 0 26 34" aria-hidden="true">
              <path d="M22 1Q28 4 22 10L14 18Q8 19 3 17Q-2 13 3 9Z" fill="#4674ad" /><path d="M4 32Q-2 30 3 25L12 16Q18 12 23 15Q28 18 22 24L13 32Z" fill="#315f9a" />
            </svg>
          </Floater>
        </Ribbon>

        <DocTabs>
          <DocTab>Start</DocTab>
          <DocTab $active>Road Design*<span>✕</span></DocTab>
        </DocTabs>

        <Workspace>
          <Toolspace>
            <ToolHead>
              <svg width="4" height="12" aria-hidden="true"><path d="M1 0V12M3.500 0V12" stroke="#bbb" strokeDasharray="1 2" /></svg>
              TOOLSPACE
            </ToolHead>
            <ToolRow><ViewerIcon /></ToolRow>
            <ViewSelect aria-label="Drawing view"><option>Active Drawing View</option></ViewSelect>
            <Tree>
              {tree.map((item, i) => (
                <TreeRow key={i}>
                  <TreeGuide item={item} first={i === 0} />
                  <Icon>{glyphs[item.icon]}{item.link && <LinkMark />}</Icon>
                  {item.warn && (
                    <Warn width="18" height="21" viewBox="0 0 18 21">
                      <path d="M0 0H18V11L9 20L0 11Z" fill="#fdb813" />
                      <path d="M9 2V10M9 12V15" stroke="#222" strokeWidth="3" />
                    </Warn>
                  )}
                  <TreeLabel $bold={i === 0}>{item.label}</TreeLabel>
                </TreeRow>
              ))}
            </Tree>
            <Preview />
          </Toolspace>
          <Canvas>
            <svg width="110" height="56" viewBox="0 0 110 56" fill="none" stroke="#e9e9e9" aria-hidden="true">
              <path d="M19.500 0V35.500H82M13.500 29.500H25.500V41.500H13.500ZM86 20L101 34M101 20L86 34" />
            </svg>
            <PlanView />
          </Canvas>
          <SideBar>
            <ToolStrip>
              <Grip />
              {sideTools.map((t, i) =>
                t === "-" ? <StripLine key={i} /> : <StripButton key={i} aria-label={t}><Icon>{tools[t]}</Icon></StripButton>
              )}
            </ToolStrip>
            <ToolStrip>
              <Grip />
              <StripButton aria-label="Pick"><Icon>{tools.pick}</Icon></StripButton>
            </ToolStrip>
          </SideBar>
        </Workspace>

        <StatusBar>
          <ModelTab>Model</ModelTab>
          <LayoutTab>Layout1</LayoutTab>
          <Slash />
          <AddTab aria-label="New layout"><svg width="17" height="17"><path d="M8.500 0V17M0 8.500H17" stroke="#ddd" strokeWidth="2" /></svg></AddTab>
          <Slash />
          <StatusTools>
            <StatusGroup><StatusText $w={59}>MODEL</StatusText></StatusGroup>
            <StatusGroup>
              <StatusIcon d="M6 0V20M10 0V20M14 0V20M0 5H20M0 10H20M0 15H20" />
              <StatusIcon d="M3 3H18M3 8H18M3 13H18M3 18H18" dash="2 4" w={2.5} />
              <StatusCaret />
            </StatusGroup>
            <StatusGroup>
              <StatusIcon d="M1 1V18H19M2 12H7V17" />
              <StatusIcon d="M12 3A7 7 0 1 0 16 10M8 10H20M8 10L14 1" />
              <StatusCaret />
              <StatusIcon d="M4 4L16 16" color="#b96268" extra="M10 0V5M11 15V20" />
              <StatusCaret />
              <StatusIcon on d="M4 17H18M4 17L17 3" />
              <StatusIcon on d="M1 1H6V6H1ZM6 3H18V19H3V6" />
              <StatusCaret />
            </StatusGroup>
            <StatusGroup>
              <StatusIcon on d="M8 2L2 18L8 13L14 18ZM15 2A2 2 0 1 0 15.100 2" fill="#fff" />
              <StatusIcon d="M8 2L2 18L8 13L14 18ZM16 0L13 5H17L14 10" fill="#ccc" />
              <StatusIcon d="M10 2L4 18L10 13L16 18Z" fill="#ccc" />
              <StatusText $w={56}>1" = 40'</StatusText>
              <StatusCaret />
            </StatusGroup>
            <StatusGroup>
              <StatusCell><Icon><circle cx="10" cy="10" r="6" fill="none" stroke="#ddd" strokeWidth="4" /><circle cx="10" cy="10" r="8.500" fill="none" stroke="#ddd" strokeWidth="3" strokeDasharray="3.300 3.300" /></Icon></StatusCell>
              <StatusCaret />
            </StatusGroup>
            <StatusGroup><StatusIcon d="M10 0V20M0 10H20" w={2.5} /></StatusGroup>
            <StatusGroup><StatusIcon d="M3 1H17V19H3ZM6 4H14M6 9H8M10 9H15M6 12H8M10 12H15M6 15H8M10 15H15" w={1.5} /></StatusGroup>
            <StatusGroup><StatusIcon d="M1 1H8V8H1ZM15 6A3.500 3.500 0 1 0 15.100 6M7 12L11 19H3Z" /></StatusGroup>
            <StatusGroup>
              <StatusCell><Icon><path d="M10 3L18 9L10 15L2 9Z" fill="#65b7f3" /><path d="M2 5L10 0L18 5M2 13L10 19L18 13" fill="none" stroke="#ccc" strokeWidth="1.500" /></Icon></StatusCell>
              <StatusText $w={60}>3.5000</StatusText>
            </StatusGroup>
            <StatusGroup $end={10}>
              <StatusCell><Icon size={24}><path d="M2 1H15Q19 5 18 12H2Z" fill="#286b9e" /><path d="M0 11H10V19H0Z" fill="#f0b429" /><path d="M8 14L12 18L19 9" fill="none" stroke="#52ad43" strokeWidth="3" /><path d="M6 1V8M2 4H10" stroke="#fff" /></Icon></StatusCell>
              <StatusCell><Icon size={18}><path d="M1 1H19V19H1Z" fill="#999" /><path d="M3 2H17V17H3Z" fill="#0838ee" /><path d="M5 15L13 6M8 6H13V11" fill="none" stroke="#05133f" strokeWidth="2.500" /></Icon></StatusCell>
              <StatusIcon d="M3 1H7V6H3ZM5 6V18M5 8H18V13M1 18H9" color="#d79469" />
              <StatusIcon d="M3 3H15M9 3V13M3 18H16L10 12Z" color="#d79469" />
            </StatusGroup>
            <StatusGroup><StatusIcon d="M3 5H17M3 10H17M3 15H17" wide /></StatusGroup>
          </StatusTools>
        </StatusBar>

        <Dialog role="dialog" aria-label="Target Mapping">
          <DialogHead>
            <DialogTitle>Target Mapping</DialogTitle>
            <FrameButtons>
              <FrameButton aria-label="Pin" $w={30}><Icon size={18}><circle cx="13" cy="7" r="6" fill="#eee" stroke="#777" /><circle cx="11" cy="8" r="3" fill="#ccc" stroke="#888" /><path d="M7 8Q4 11 6 14Q10 15 12 12M6 13L1 18" fill="#ddd" stroke="#777" strokeWidth="1.500" /></Icon></FrameButton>
              <FrameButton aria-label="Help" $w={29}><Icon size={18}><path d="M6 7Q6 3 10 3T14 7Q14 9 10 11V13M10 15.500V18" fill="none" stroke="#444" strokeWidth="5" /><path d="M6 7Q6 3 10 3T14 7Q14 9 10 11V13M10 15.500V18" fill="none" stroke="#fff" strokeWidth="2.500" /></Icon></FrameButton>
              <FrameButton aria-label="Close" $w={41} $red><Icon size={18}><path d="M2 3L18 17M18 3L2 17" stroke="#62434a" strokeWidth="7" /><path d="M3 4L17 16M17 4L3 16" stroke="#fff" strokeWidth="4.500" /></Icon></FrameButton>
            </FrameButtons>
          </DialogHead>
          <DialogBody>
            <Fields>
              <Field $w={352}><label htmlFor="corridor">Corridor</label><input id="corridor" readOnly value="Sycamore Heights" /></Field>
              <Field $w={196}><label htmlFor="start">Baseline Start Station:</label><input id="start" readOnly value="0+00.00" /></Field>
              <Field $w={196}><label htmlFor="end">Baseline End Station:</label><input id="end" readOnly value="16+04.81" /></Field>
            </Fields>
            <TabLine>
              <PageTab $active>Offset and Elevation</PageTab>
              <PageTab>Surface</PageTab>
              <TableTools>
                <SquareButton aria-label="Expand all"><Icon><path d="M2 1H8V7H2Z" fill="none" stroke="#777" /><path d="M4 3H6V5H4Z" fill="#777" /><path d="M5 9V19" stroke="#555" strokeDasharray="2 1" /><path d="M11 8H19L15 13Z" fill="#555" /></Icon></SquareButton>
                <SquareButton aria-label="Collapse all"><Icon><path d="M1 1H7V7H1ZM1 12H7V18H1Z" fill="none" stroke="#777" /><path d="M3 3H5V5H3ZM3 14H5V16H3Z" fill="#777" /><path d="M10 11H19L14.500 5Z" fill="#555" /></Icon></SquareButton>
                <SquareButton aria-label="Clear filter"><Icon><path d="M1 1H17V3L11 10V18L7 14V10L1 3Z" fill="#ccc" stroke="#777" /><path d="M13 12L19 18M19 12L13 18" stroke="#f02020" strokeWidth="2.500" /></Icon></SquareButton>
                <SquareButton aria-label="Refresh"><Icon size={22}><path d="M2 8A8 7 0 0 1 17 6M18 12A8 7 0 0 1 3 14" fill="none" stroke="#1fb04d" strokeWidth="2.500" /><path d="M19 2V9H12ZM1 18V11H8Z" fill="#1fb04d" /></Icon></SquareButton>
              </TableTools>
            </TabLine>
            <Panel>
              <TargetTable>
                <colgroup>
                  <col width="187" />
                  {columns.map((c) => <col key={c.title} width="120" />)}
                  <col />
                </colgroup>
                <thead>
                  <tr>
                    <HeadCell $first><HeadLabel $first>Subassembly<Caret w={15} color="#666" /></HeadLabel></HeadCell>
                    {columns.map((c) => (
                      <HeadCell key={c.title}><HeadLabel>{c.title}{c.filter && <Caret w={15} color="#666" />}</HeadLabel></HeadCell>
                    ))}
                    <HeadCell />
                  </tr>
                </thead>
                <tbody>
                  {targets.map((t, i) => (
                    <tr key={i}>
                      <NameCell><NameLine><TargetGuide kind={t.kind} index={i} />{t.name}</NameLine></NameCell>
                      <Cell>BL - Sycamore ...</Cell>
                      <Cell>RG - Subdivisio...</Cell>
                      <Cell>0+76.39</Cell>
                      <Cell>12+91.07</Cell>
                      <Cell>Subdivision</Cell>
                      <Cell>{t.side}</Cell>
                      <Cell>{t.side}</Cell>
                      <Cell $empty={t.kind === "elevation"} $pad={t.kind === "group" ? 6 : 1}>
                        {t.kind === "group" && "<Set All>"}
                        {t.kind === "width" && <LinkLine><Icon size={18}>{glyphs.alignment}</Icon>Sycamore H...</LinkLine>}
                      </Cell>
                      <Cell $empty={t.kind === "width"} $open={i === 5} $pad={t.kind === "group" ? 6 : 0}>
                        {t.kind === "group" && "<Set All>"}
                        {t.kind === "elevation" && (
                          <LinkLine><Icon size={19}><path d="M.5 1V19H19V1L10 8Z" fill="#f0f0f0" stroke="#888" /><path d="M0 0L8 7H12L19 0" fill="none" stroke="#5bb4f5" strokeWidth="1.500" /><path d="M8 6h4v3H8z" fill="#2196e8" /></Icon>Sycamore H...</LinkLine>
                        )}
                      </Cell>
                      <EndCell />
                    </tr>
                  ))}
                  <FillRow>
                    <td />
                    {columns.map((c) => <EndCell key={c.title} />)}
                    <EndCell />
                  </FillRow>
                </tbody>
              </TargetTable>
            </Panel>
            <Footer>
              <CheckLabel><input type="checkbox" />Rebuild corridor</CheckLabel>
              <PushButton>OK</PushButton>
              <PushButton>Cancel</PushButton>
              <PushButton>Apply</PushButton>
            </Footer>
            <Resize width="14" height="14"><path d="M0 14L14 0M5 14L14 5M10 14L14 10" stroke="#999" strokeWidth="2" /></Resize>
          </DialogBody>
        </Dialog>
      </Shell>

      <Taskbar>
        <Weather>
          <svg width="25" height="25" aria-hidden="true">
            <defs><linearGradient id="sun" x1="0" y1="0" x2="1" y2="1"><stop stopColor="#f4be32" /><stop offset="1" stopColor="#f0600c" /></linearGradient></defs>
            <circle cx="12.500" cy="12.500" r="12.500" fill="url(#sun)" />
          </svg>
          <div><p>16°C</p><p>Sunny</p></div>
        </Weather>
        <Apps>
          <AppButton aria-label="Start">
            <svg width="29" height="29" viewBox="0 0 29 29"><path d="M0 0H14V14H0Z" fill="#70e3fb" /><path d="M15 0H29V14H15Z" fill="#4cc9f8" /><path d="M0 15H14V29H0Z" fill="#3bb5f7" /><path d="M15 15H29V29H15Z" fill="#159df8" /></svg>
          </AppButton>
          <SearchBox>
            <Search size={20} color="#ddd" />
            <input aria-label="Search" placeholder="Search" />
          </SearchBox>
          {taskApps.map((a) => (
            <AppButton key={a.name} aria-label={a.name} $active={a.active}>
              <svg width="30" height="30" viewBox="0 0 30 30">{a.icon}</svg>
              {a.badge && <Badge>{a.badge}</Badge>}
              {a.mark && <Mark $kind={a.mark} />}
            </AppButton>
          ))}
        </Apps>
        <Tray>
          <TrayCell><ChevronUp size={18} /></TrayCell>
          <TrayCell><BlueDot><Bluetooth size={14} /></BlueDot></TrayCell>
          <TrayCell><Icon><path d="M4 14Q0 13 1 9Q3 7 5 8Q7 3 12 5Q16 6 16 10V14Z" fill="#aaa" /><circle cx="14" cy="14" r="6" fill="#ffe029" /><path d="M14 10V14M14 16V17.500" stroke="#222" strokeWidth="1.500" /></Icon></TrayCell>
          <TrayIcons><Wifi size={20} /><Volume2 size={20} />
            <Icon><path d="M5 6H17V16H3V11M18 9H20V13H18" fill="none" stroke="#eee" strokeWidth="1.500" /><path d="M1 3H6V7L3 10L1 7ZM7 14V9H12Z" fill="#eee" /></Icon>
          </TrayIcons>
          <Clock><p>11:34 AM</p><p>7/2/2023</p></Clock>
          <Count>5</Count>
          <DeskLine />
        </Tray>
      </Taskbar>
      <Tooltip role="tooltip">Show desktop</Tooltip>
    </Desktop>
  );
};

const ViewerIcon = () => (
  <Icon><path d="M0 0H19V20H0Z" fill="#ddd" /><path d="M0 0H19V3H0Z" fill="#aaa" /><path d="M3 9L6 5H16V14L13 18H3Z" fill="#4dc579" /><path d="M3 9L6 5H16L13 9Z" fill="#85e3a5" /></Icon>
);

const RoadIcon = ({ tail, blue }) => (
  <Icon>
    <path d="M0 0Q10 3 11 13L1 12Z" fill="#8a8a8a" />
    <path d="M3 2Q6 6 7 11" fill="none" stroke="#ffd14c" strokeWidth="2" strokeDasharray="3 2" />
    <path d="M1 13V16H6M4 14L6 16L4 18" fill="none" stroke="#fff" strokeWidth="1.500" />
    <path d={tail} fill="none" stroke={blue ? "#65b7f3" : "#ccc"} strokeWidth="1.500" strokeDasharray={blue ? "3 1" : undefined} />
  </Icon>
);

const StatusIcon = ({ d, color = "#ddd", fill = "none", w = 1.3, dash, extra, on, wide }) => (
  <StatusCell $on={on} $wide={wide}>
    <Icon>
      <path d={d} fill={fill} stroke={color} strokeWidth={w} strokeDasharray={dash} />
      {extra && <path d={extra} stroke="#ccc" />}
    </Icon>
  </StatusCell>
);

const StatusCaret = () => (
  <CaretCell><Caret /></CaretCell>
);

const GlobalStyle = createGlobalStyle`
  * {
    box-sizing: border-box;
  }
  body {
    margin: 0;
    background: #222933;
    color: #e8e8e8;
    font-family: "Open Sans", "Noto Sans", sans-serif;
    font-size: 14px;
    line-height: 20px;
    overflow: hidden;
  }
  p, ul {
    margin: 0;
    padding: 0;
  }
  button, input, select {
    font: inherit;
    color: inherit;
    border: 0;
    padding: 0;
    margin: 0;
    background: none;
  }
  svg {
    display: block;
  }
`;

const Desktop = styled.div`
  display: flex;
  flex-direction: column;
  height: 100vh;
  padding: 0 2px;
  background: linear-gradient(#3a0d10 0 55px, #8c1d22 55px 105px, #000 105px 228px, #fff 228px);
`;

const Shell = styled.main`
  position: relative;
  flex: 1;
  min-height: 0;
  display: flex;
  flex-direction: column;
  background: #222933;
  border: 1px solid #0696d7;
`;

const TitleBar = styled.header`
  display: flex;
  justify-content: space-between;
  height: 38px;
  padding: 0 4px 2px 3px;
`;

const QuickBar = styled.div`
  display: flex;
  align-items: center;
  gap: 10px;
`;

const UserBar = styled.div`
  display: flex;
  align-items: center;
`;

const UserName = styled.span`
  margin-left: 8px;
  width: 90px;
  white-space: nowrap;
`;

const BarButton = styled.button`
  width: ${(p) => p.$w}px;
  display: flex;
  justify-content: center;
`;

const BarLine = styled.span`
  width: 1px;
  height: 22px;
  margin-left: 12px;
  background: #4b5464;
`;

const Spacer = styled.span`
  width: ${(p) => p.$w}px;
`;

const RibbonTabs = styled.nav`
  display: flex;
  align-items: stretch;
  height: 25px;
  padding: 0 192px 0 18px;
  gap: 25px;
`;

const RibbonTab = styled.button`
  color: #a9adb3;
`;

const ContextTab = styled.button`
  margin-left: auto;
  padding: 0 11px;
  background: #0696d7;
  color: #fff;
`;

const RibbonToggle = styled.button`
  display: flex;
  align-items: center;
  gap: 5px;
  width: 36px;
`;

const Ribbon = styled.section`
  position: relative;
  display: flex;
  height: 124px;
  margin: 0 3px;
  background: #3b4453;
  border: 1px solid #0696d7;
`;

const GeneralPanel = styled.div`
  display: flex;
  flex-direction: column;
  width: 144px;
  padding: 4px 0 0 7px;
  border-right: 1px solid #222933;
`;

const RibbonItem = styled.button`
  display: flex;
  flex-shrink: 0;
  align-items: center;
  gap: 7px;
  height: 31px;
  white-space: nowrap;
`;

const PanelTitle = styled.div`
  display: flex;
  flex-shrink: 0;
  align-items: center;
  gap: 9px;
  height: 28px;
  padding-left: 11px;
`;

const RehabPanel = styled.div`
  display: flex;
  flex-direction: column;
  width: 58px;
  overflow: hidden;
  padding: 8px 0 0 5px;
  color: #70757e;
  white-space: nowrap;
  svg {
    flex-shrink: 0;
    margin: 0 0 6px 30px;
  }
`;

const RehabTop = styled.span`
  padding-left: 37px;
`;

const EditPanel = styled.div`
  display: flex;
  flex-direction: column;
  width: 50px;
  margin-left: auto;
  padding-top: 10px;
  gap: 11px;
  border-right: 1px solid #222933;
`;

const LaunchPanel = styled.div`
  display: grid;
  grid-template-columns: 126px 1fr;
  width: 333px;
  padding-top: 4px;
  align-content: start;
`;

const SuperButton = styled.button`
  display: flex;
  flex-direction: column;
  align-items: center;
  justify-content: flex-start;
  gap: 2px;
  padding-top: 6px;
  svg:first-child {
    margin-bottom: 6px;
  }
`;

const LaunchList = styled.div`
  padding-left: 3px;
`;

const LaunchTitle = styled.div`
  grid-column: 1 / 3;
  display: flex;
  align-items: center;
  gap: 9px;
  height: 28px;
  padding-left: 119px;
`;

const Floater = styled.div`
  position: absolute;
  right: 6px;
  bottom: -8px;
  width: 58px;
  height: 58px;
  display: flex;
  align-items: center;
  justify-content: center;
  border-radius: 12px;
  background: rgba(37, 48, 70, 0.5);
  svg {
    opacity: 0.7;
  }
`;

const DocTabs = styled.nav`
  display: flex;
  height: 32px;
  padding: 4px 0 0 14px;
`;

const DocTab = styled.button`
  display: flex;
  align-items: center;
  gap: 12px;
  padding: ${(p) => (p.$active ? "0 20px" : "0 10px 0 20px")};
  font-weight: ${(p) => (p.$active ? 700 : 400)};
  color: ${(p) => (p.$active ? "#fff" : "#ddd")};
  background: ${(p) => (p.$active ? "#3b4453" : "transparent")};
  clip-path: ${(p) => (p.$active ? "polygon(9px 0, 100% 0, 100% 100%, 0 100%)" : "none")};
`;

const Workspace = styled.div`
  display: flex;
  flex: 1;
  min-height: 0;
  margin: 0 3px;
  padding: 5px 0;
  background: #3b4453;
`;

const Toolspace = styled.aside`
  display: flex;
  flex-direction: column;
  width: 454px;
  margin-right: 33px;
  padding: 3px 0 7px;
`;

const ToolHead = styled.div`
  display: flex;
  align-items: center;
  gap: 6px;
  height: 27px;
  padding-left: 9px;
  background: #2e3440;
`;

const ToolRow = styled.div`
  display: flex;
  align-items: center;
  height: 37px;
  padding-left: 6px;
`;

const ViewSelect = styled.select`
  appearance: none;
  height: 24px;
  padding-left: 4px;
  background: #fff;
  color: #000;
  font-size: 12px;
  border: 1px solid #aaa;
`;

const Tree = styled.ul`
  flex: 1;
  min-height: 0;
  overflow: hidden;
  margin-top: 2px;
  padding-top: 2px;
  background: #fff;
  color: #000;
  border: 1px solid #888;
  border-width: 1px 0;
`;

const TreeRow = styled.li`
  display: flex;
  align-items: center;
  height: 24px;
  list-style: none;
  white-space: nowrap;
`;

const TreeLabel = styled.span`
  margin-left: 8px;
  font-weight: ${(p) => (p.$bold ? 700 : 400)};
`;

const Warn = styled.svg`
  margin-left: 4px;
`;

const Preview = styled.div`
  height: 94px;
  margin-top: 7px;
  border: 1px solid #9a9fa6;
`;

const Canvas = styled.section`
  display: flex;
  flex: 1;
  min-width: 0;
  align-items: flex-end;
  justify-content: space-between;
  overflow: hidden;
  background: #222830;
`;

const SideBar = styled.aside`
  display: flex;
  flex-direction: column;
  gap: 2px;
  width: 38px;
  padding: 0 4px;
`;

const ToolStrip = styled.div`
  display: flex;
  flex-direction: column;
  align-items: center;
  background: #3b4453;
  border: 1px solid #222933;
`;

const Grip = styled.div`
  width: 17px;
  height: 9px;
  margin-bottom: 1px;
  background: repeating-linear-gradient(90deg, #ccc 0 1px, transparent 1px 3px);
  clip-path: polygon(0 4px, 100% 4px, 100% 5px, 0 5px, 0 7px, 100% 7px, 100% 8px, 0 8px);
`;

const StripButton = styled.button`
  display: flex;
  align-items: center;
  justify-content: center;
  height: 28px;
  width: 28px;
`;

const StripLine = styled.div`
  height: 2px;
  width: 25px;
  margin: 2px 0;
  background: #fff;
`;

const StatusBar = styled.footer`
  display: flex;
  height: 39px;
  padding: 0 4px 0 13px;
`;

const ModelTab = styled.button`
  height: 30px;
  width: 86px;
  background: #3b4453;
  color: #fff;
  font-weight: 700;
  clip-path: polygon(12px 0, 100% 0, 74px 100%, 0 100%);
`;

const LayoutTab = styled.button`
  height: 30px;
  width: 70px;
`;

const Slash = styled.span`
  width: 10px;
  height: 20px;
  margin: 5px 2px;
  background: linear-gradient(112deg, transparent 46%, #5b6472 46% 54%, transparent 54%);
`;

const AddTab = styled.button`
  height: 30px;
  width: 34px;
  display: flex;
  align-items: center;
  justify-content: center;
`;

const StatusTools = styled.div`
  display: flex;
  gap: 3px;
  margin-left: auto;
  padding-top: 2px;
`;

const StatusGroup = styled.div`
  display: flex;
  align-items: center;
  height: 30px;
  padding-right: ${(p) => p.$end || 0}px;
  background: #3b4453;
  white-space: nowrap;
`;

const StatusCell = styled.span`
  display: flex;
  align-items: center;
  justify-content: center;
  width: ${(p) => (p.$wide ? 60 : 30)}px;
  height: 30px;
  background: ${(p) => (p.$on ? "#6090c4" : "transparent")};
  box-shadow: inset 1px 0 ${(p) => (p.$on ? "#3b4453" : "transparent")};
`;

const CaretCell = styled.span`
  display: flex;
  justify-content: center;
  width: 21px;
`;

const StatusText = styled.span`
  width: ${(p) => p.$w}px;
  text-align: center;
`;

const Dialog = styled.section`
  position: absolute;
  top: 1px;
  right: 386px;
  bottom: 91px;
  left: 205px;
  display: flex;
  flex-direction: column;
  padding: 0 7px 7px;
  background: linear-gradient(#bccad9, #d7e4f2 36px);
  border: 1px solid #4c5058;
  border-top-color: #fff;
  box-shadow: inset 0 0 0 1px #edf4fb;
  color: #000;
`;

const DialogHead = styled.div`
  display: flex;
  justify-content: space-between;
  height: 35px;
`;

const DialogTitle = styled.h1`
  margin: 11px 0 0 1px;
  font-size: 14px;
  line-height: 20px;
  font-weight: 400;
  color: #999;
`;

const FrameButtons = styled.div`
  display: flex;
  margin-right: -7px;
`;

const FrameButton = styled.button`
  display: flex;
  align-items: center;
  justify-content: center;
  width: ${(p) => p.$w}px;
  height: 20px;
  border: 1px solid ${(p) => (p.$red ? "#5c1a1a" : "#7e8fa5")};
  border-top: 0;
  background: ${(p) => (p.$red ? "linear-gradient(#e2a08f 45%, #bd4029 50%, #cf5b40)" : "linear-gradient(#c3d0e0 45%, #a6b8cd 50%, #bccbdc)")};
`;

const DialogBody = styled.div`
  position: relative;
  flex: 1;
  min-height: 0;
  display: flex;
  flex-direction: column;
  padding: 9px 11px 9px 10px;
  background: #f0f0f0;
  font-size: 12px;
`;

const Fields = styled.div`
  display: flex;
  gap: 25px;
`;

const Field = styled.div`
  display: flex;
  flex-direction: column;
  gap: 5px;
  width: ${(p) => p.$w}px;
  line-height: 16px;
  input {
    height: 23px;
    padding-left: 5px;
    border: 2px solid #fafafa;
    border-bottom: 1px solid #868686;
  }
`;

const TabLine = styled.div`
  display: flex;
  align-items: flex-end;
  height: 37px;
`;

const PageTab = styled.button`
  height: ${(p) => (p.$active ? 25 : 22)}px;
  padding: 0 ${(p) => (p.$active ? 7 : 5)}px;
  background: ${(p) => (p.$active ? "#fafafa" : "#f2f2f2")};
  border: 1px solid #e2e2e2;
  border-bottom: 0;
`;

const TableTools = styled.div`
  display: flex;
  gap: 9px;
  margin-left: auto;
  align-self: flex-start;
  padding-top: 6px;
`;

const SquareButton = styled.button`
  display: flex;
  align-items: center;
  justify-content: center;
  width: 26px;
  height: 29px;
  border: 1px solid #ccc;
  border-radius: 4px;
  background: #fbfbfb;
`;

const Panel = styled.div`
  flex: 1;
  min-height: 0;
  border: 1px solid #646464;
  margin-left: 2px;
`;

const TargetTable = styled.table`
  width: 100%;
  table-layout: fixed;
  border-spacing: 0;
  background: #ffffe8;
  border-bottom: 1px solid #828790;
  font-size: 14px;
  line-height: 20px;
  td, th {
    padding: 0;
    overflow: hidden;
    white-space: nowrap;
    font-weight: 400;
    text-align: left;
  }
`;

const HeadCell = styled.th`
  height: 27px;
  background: #fff;
  border-bottom: 1px solid #828790;
  border-left: 1px solid ${(p) => (p.$first ? "#fff" : "#e0e0e0")};
`;

const HeadLabel = styled.div`
  display: flex;
  align-items: center;
  justify-content: flex-start;
  gap: 15px;
  padding-left: ${(p) => (p.$first ? 5 : 8)}px;
`;

const NameCell = styled.td`
  height: 24px;
`;

const NameLine = styled.div`
  display: flex;
  align-items: center;
  height: 24px;
`;

const Cell = styled.td`
  height: 24px;
  && {
    padding-left: ${(p) => (p.$pad === undefined ? 4 : p.$pad)}px;
  }
  background: ${(p) => (p.$empty ? "#ffffe8" : "#fff")};
  border-left: 1px solid #ffc0c0;
  border-bottom: ${(p) => (p.$open ? "0" : "1px solid #7f9db9")};
`;

const LinkLine = styled.div`
  display: flex;
  align-items: center;
  gap: 5px;
`;

const EndCell = styled.td`
  border-left: 1px solid #ffc0c0;
`;

const FillRow = styled.tr`
  height: 219px;
`;

const Footer = styled.div`
  display: flex;
  align-items: center;
  justify-content: flex-end;
  gap: 9px;
  padding-top: 13px;
`;

const CheckLabel = styled.label`
  display: flex;
  align-items: center;
  gap: 3px;
  margin-right: 24px;
  input {
    appearance: none;
    width: 16px;
    height: 16px;
    border: 1px solid #555;
    border-radius: 3px;
    background: #f6f6f6;
  }
`;

const PushButton = styled.button`
  width: 89px;
  height: 26px;
  background: #fdfdfd;
  border: 1px solid #d0d0d0;
  border-bottom-color: #b5b5b5;
  border-radius: 4px;
`;

const Resize = styled.svg`
  position: absolute;
  right: 0;
  bottom: 0;
`;

const Taskbar = styled.footer`
  display: grid;
  grid-template-columns: 1fr auto 1fr;
  align-items: center;
  height: 60px;
  margin: 0 -2px;
  padding-bottom: 2px;
  background: linear-gradient(90deg, #23282b, #252728 20%, #2e2116 27%, #2e2116);
  border-top: 1px solid #44403b;
  color: #fff;
`;

const Weather = styled.div`
  display: flex;
  align-items: center;
  gap: 12px;
  padding-left: 27px;
  p + p {
    color: #bbb;
  }
`;

const Apps = styled.div`
  display: flex;
  align-items: center;
  gap: 6px;
`;

const AppButton = styled.button`
  position: relative;
  display: flex;
  align-items: center;
  justify-content: center;
  width: 49px;
  height: 50px;
  border-radius: 5px;
  background: ${(p) => (p.$active ? "#40342b" : "transparent")};
`;

const SearchBox = styled.div`
  display: flex;
  align-items: center;
  gap: 11px;
  width: 275px;
  height: 40px;
  padding-left: 15px;
  border-radius: 20px;
  background: #463a30;
  font-size: 16px;
  input {
    width: 180px;
    outline: none;
  }
  input::placeholder {
    color: #ccc;
    opacity: 1;
  }
`;

const Badge = styled.span`
  position: absolute;
  top: 3px;
  right: 2px;
  width: 20px;
  height: 20px;
  border-radius: 10px;
  background: #4cc2ff;
  color: #222;
  font-size: 12px;
  text-align: center;
`;

const Mark = styled.span`
  position: absolute;
  bottom: 1px;
  width: ${(p) => (p.$kind === "dot" ? 8 : p.$kind === "bar" ? 20 : 15)}px;
  height: 4px;
  border-radius: 2px;
  background: ${(p) => (p.$kind === "dot" ? "#9b948d" : p.$kind === "bar" ? "#4cc2ff" : "#ff99a4")};
`;

const Tray = styled.div`
  display: flex;
  align-items: center;
  justify-content: flex-end;
  padding-right: 7px;
`;

const TrayCell = styled.span`
  display: flex;
  justify-content: center;
  width: 40px;
`;

const TrayIcons = styled.span`
  display: flex;
  gap: 11px;
  padding: 0 8px;
`;

const BlueDot = styled.span`
  display: flex;
  align-items: center;
  justify-content: center;
  width: 16px;
  height: 20px;
  border-radius: 8px;
  background: #0a84f0;
`;

const Clock = styled.div`
  width: 76px;
  text-align: right;
`;

const Count = styled.span`
  width: 20px;
  height: 20px;
  margin: 0 17px 0 9px;
  border-radius: 10px;
  background: #4cc2ff;
  color: #222;
  font-size: 12px;
  text-align: center;
`;

const DeskLine = styled.span`
  width: 1px;
  height: 20px;
  background: #888;
`;

const Tooltip = styled.div`
  position: absolute;
  right: 0;
  bottom: 76px;
  width: 119px;
  height: 38px;
  padding: 9px 0 0 11px;
  border-radius: 6px 0 0 6px;
  background: #262c36;
  color: #fff;
  white-space: nowrap;
`;

export default App;
